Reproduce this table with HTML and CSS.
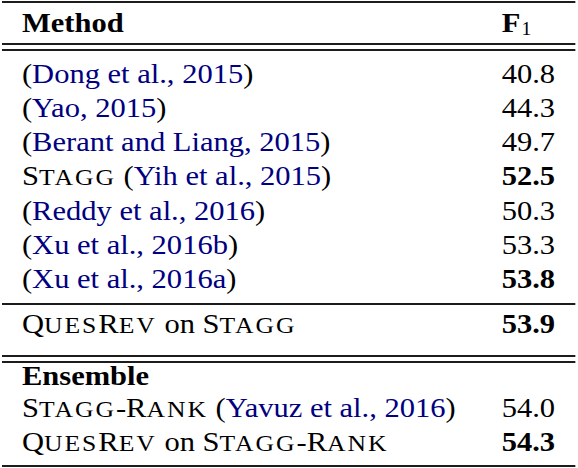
FILE: index.html
```html
<!DOCTYPE html>
<html>
<head>
<meta charset="utf-8">
<link rel="stylesheet" href="styles.css">
</head>
<body>
<div class="tbl">
  <div class="rule rule-top"></div>
  <div class="row head"><span class="c1 b">Method</span><span class="c2"><b>F</b><span class="sub">1</span></span></div>
  <div class="rule rule-h1"></div>
  <div class="rule rule-h2"></div>
  <div class="group g1">
    <div class="row"><span class="c1">(<span class="cite">Dong et al., 2015</span>)</span><span class="c2">40.8</span></div>
    <div class="row"><span class="c1">(<span class="cite">Yao, 2015</span>)</span><span class="c2">44.3</span></div>
    <div class="row"><span class="c1">(<span class="cite">Berant and Liang, 2015</span>)</span><span class="c2">49.7</span></div>
    <div class="row"><span class="c1">S<span class="sc">tagg</span> (<span class="cite">Yih et al., 2015</span>)</span><span class="c2 b">52.5</span></div>
    <div class="row"><span class="c1">(<span class="cite">Reddy et al., 2016</span>)</span><span class="c2">50.3</span></div>
    <div class="row"><span class="c1">(<span class="cite">Xu et al., 2016b</span>)</span><span class="c2">53.3</span></div>
    <div class="row"><span class="c1">(<span class="cite">Xu et al., 2016a</span>)</span><span class="c2 b">53.8</span></div>
  </div>
  <div class="rule rule-m"></div>
  <div class="row qr"><span class="c1">Q<span class="sc">ues</span>R<span class="sc">ev</span> on S<span class="sc">tagg</span></span><span class="c2 b">53.9</span></div>
  <div class="rule rule-d1"></div>
  <div class="rule rule-d2"></div>
  <div class="group g2">
    <div class="row low"><span class="c1 b">Ensemble</span><span class="c2"></span></div>
    <div class="row low"><span class="c1">S<span class="sc">tagg</span>-R<span class="sc">ank</span> (<span class="cite">Yavuz et al., 2016</span>)</span><span class="c2">54.0</span></div>
    <div class="row low"><span class="c1">Q<span class="sc">ues</span>R<span class="sc">ev</span> on S<span class="sc">tagg</span>-R<span class="sc">ank</span></span><span class="c2 b">54.3</span></div>
  </div>
  <div class="rule rule-bottom"></div>
</div>
</body>
</html>
```

FILE: styles.css
```css
html, body {
  margin: 0;
  padding: 0;
  background: #ffffff;
}

body {
  font-family: "Liberation Serif", "Times New Roman", serif;
  font-size: 28px;
  color: #000000;
}

/* the reference is rendered slightly wider than tall */
.tbl {
  width: 526px;
  margin-left: 2px;
  padding-top: 1px;
  transform: scaleX(1.09);
  transform-origin: 0 0;
}

.rule {
  height: 2px;
  background: #1c1c1c;
}

.row {
  display: grid;
  grid-template-columns: 458.4px 1fr;
  line-height: 34px;
  white-space: nowrap;
}

.c1 {
  padding-left: 18.3px;
}

.b {
  font-weight: bold;
}

.cite {
  color: #000080;
}

.sc {
  text-transform: uppercase;
  font-size: 0.84em;
  letter-spacing: 1.8px;
}

.sub {
  font-size: 18px;
  line-height: 0;
  vertical-align: -3px;
  margin-left: 1px;
}

.head {
  margin-top: 2.6px;
}

.rule-h1 {
  margin-top: 3.4px;
}

.rule-h2 {
  margin-top: 4px;
}

.g1 {
  margin-top: 6px;
}

.rule-m {
  margin-top: 7px;
}

.qr {
  margin-top: 2.5px;
}

.rule-d1 {
  margin-top: 12.5px;
}

.rule-d2 {
  margin-top: 4px;
}

.g2 {
  margin-top: 0;
}

.row.low {
  line-height: 26px;
  padding-bottom: 6.5px;
}

.rule-bottom {
  margin-top: 3px;
}
```
